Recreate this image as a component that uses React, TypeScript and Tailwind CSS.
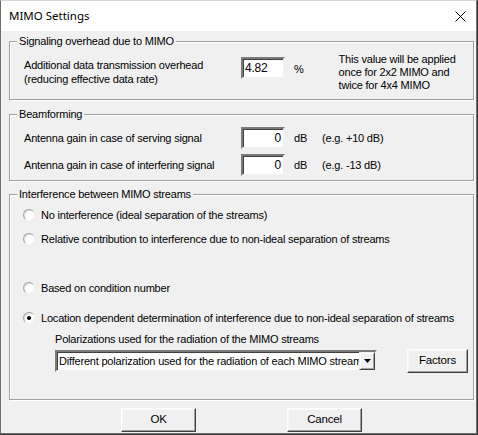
import React from "react";

const font = { fontFamily: '"Liberation Sans", Arial, sans-serif' };

function Group({ title, className, children }: { title: string; className?: string; children: React.ReactNode }) {
  return (
    <div
      className={
        "relative border border-[#a0a0a0] shadow-[inset_1px_1px_0_#fff,1px_1px_0_#fff] " + (className ?? "")
      }
    >
      <span className="absolute left-[7px] top-[-8px] bg-[#f0f0f0] px-[2px] leading-[14px]">{title}</span>
      {children}
    </div>
  );
}

function Field({ value, align = "left" }: { value: string; align?: "left" | "right" }) {
  return (
    <div
      className={
        "w-[44px] h-[22px] bg-white border-2 border-t-[#7a7a7a] border-l-[#7a7a7a] border-b-[#f0f0f0] border-r-[#f0f0f0] shadow-[inset_1px_1px_0_#404040] flex items-center px-[2px] " +
        (align === "right" ? "justify-end" : "justify-start")
      }
    >
      <span className="text-[12px] leading-none">{value}</span>
    </div>
  );
}

function Radio({ checked, label }: { checked?: boolean; label: string }) {
  return (
    <div className="flex items-center h-[14px]">
      <div className="ml-[13px] w-[12px] h-[12px] rounded-full bg-white border border-t-[#a0a0a0] border-l-[#a0a0a0] border-b-[#f0f0f0] border-r-[#f0f0f0] shadow-[inset_1px_1px_0_#e0e0e0] flex items-center justify-center">
        {checked && <div className="w-[4px] h-[4px] rounded-full bg-black" />}
      </div>
      <span className="ml-[6px]">{label}</span>
    </div>
  );
}

function Button({ label, className }: { label: string; className?: string }) {
  return (
    <div
      className={
        "h-[24px] bg-[#f0f0f0] border border-t-white border-l-white border-b-[#404040] border-r-[#404040] shadow-[inset_-1px_-1px_0_#a0a0a0,inset_1px_1px_0_#f8f8f8] flex items-center justify-center " +
        (className ?? "")
      }
    >
      <span className="text-[11.5px]">{label}</span>
    </div>
  );
}

export default function App() {
  return (
    <div className="w-[478px] h-[435px] bg-[#3a3a3a] text-black text-[11px] tracking-[-0.2px]" style={font}>
      <div className="w-[477px] h-[434px] border border-t-[#d8d8d8] border-[#6e6e6e] flex flex-col bg-[#f0f0f0]">
        {/* Title bar */}
        <div className="h-[30px] bg-white flex items-center justify-between pl-[8px] pr-[9px]">
          <span className="text-[11.5px] tracking-normal" style={{ fontFamily: '"Noto Sans", "Open Sans", sans-serif' }}>
            MIMO Settings
          </span>
          <svg width="11" height="11" viewBox="0 0 11 11" className="mr-[1px]">
            <path d="M0.5 0.5 L10.5 10.5 M10.5 0.5 L0.5 10.5" stroke="#000" strokeWidth="1" />
          </svg>
        </div>

        {/* Body */}
        <div className="flex-1 px-[8px] pt-[10px]">
          <Group title="Signaling overhead due to MIMO" className="h-[59px] w-[465px]">
            <div className="flex items-start pt-[15px] pl-[14px]">
              <div className="w-[217px] leading-[14px] pt-[1px]">
                <div>Additional data transmission overhead</div>
                <div>(reducing effective data rate)</div>
              </div>
              <Field value="4.82" />
              <span className="ml-[9px] mt-[4px]">%</span>
              <div className="ml-[35px] mt-[-4px] leading-[13px]">
                <div>This value will be applied</div>
                <div>once for 2x2 MIMO and</div>
                <div>twice for 4x4 MIMO</div>
              </div>
            </div>
          </Group>

          <Group title="Beamforming" className="mt-[14px] h-[67px] w-[465px]">
            <div className="flex flex-col gap-[5px] pt-[12px] pl-[14px]">
              <div className="flex items-center">
                <span className="w-[217px]">Antenna gain in case of serving signal</span>
                <Field value="0" align="right" />
                <span className="ml-[9px]">dB</span>
                <span className="ml-[15px]">(e.g. +10 dB)</span>
              </div>
              <div className="flex items-center">
                <span className="w-[217px]">Antenna gain in case of interfering signal</span>
                <Field value="0" align="right" />
                <span className="ml-[9px]">dB</span>
                <span className="ml-[15px]">(e.g. -13 dB)</span>
              </div>
            </div>
          </Group>

          <Group title="Interference between MIMO streams" className="mt-[13px] h-[206px] w-[465px]">
            <div className="flex flex-col pt-[13px]">
              <Radio label="No interference (ideal separation of the streams)" />
              <div className="h-[10px]" />
              <Radio label="Relative contribution to interference due to non-ideal separation of streams" />
              <div className="h-[35px]" />
              <Radio label="Based on condition number" />
              <div className="h-[16px]" />
              <Radio checked label="Location dependent determination of interference due to non-ideal separation of streams" />
              <div className="pl-[45px] mt-[7px] leading-[14px]">Polarizations used for the radiation of the MIMO streams</div>
              <div className="flex items-center mt-[3px] pl-[45px]">
                <div className="w-[322px] h-[22px] bg-white border-2 border-t-[#7a7a7a] border-l-[#7a7a7a] border-b-[#f0f0f0] border-r-[#f0f0f0] shadow-[inset_1px_1px_0_#404040] flex items-center overflow-hidden">
                  <span className="flex-1 pl-[2px] whitespace-nowrap overflow-hidden text-[11px]">
                    Different polarization used for the radiation of each MIMO stream
                  </span>
                  <div className="w-[16px] h-[18px] bg-[#f0f0f0] border border-t-[#f0f0f0] border-l-[#f0f0f0] border-b-[#404040] border-r-[#404040] shadow-[inset_1px_1px_0_#fff,inset_-1px_-1px_0_#a0a0a0] flex items-center justify-center">
                    <svg width="7" height="4" viewBox="0 0 7 4">
                      <path d="M0 0 H7 L3.5 4 Z" fill="#000" />
                    </svg>
                  </div>
                </div>
                <Button label="Factors" className="ml-[30px] w-[61px]" />
              </div>
            </div>
          </Group>

          <div className="flex mt-[8px]">
            <Button label="OK" className="ml-[112px] w-[75px]" />
            <Button label="Cancel" className="ml-[91px] w-[75px]" />
          </div>
        </div>
      </div>
    </div>
  );
}
